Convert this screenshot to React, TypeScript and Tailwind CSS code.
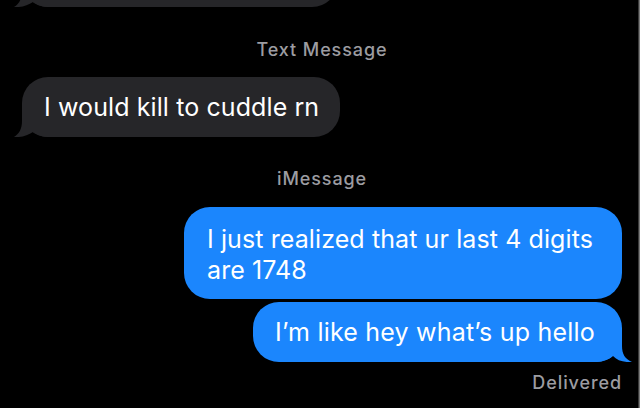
import React from "react";

const GRAY = "#262629";
const BLUE = "#1b86fd";

function LeftTail() {
  return (
    <svg
      className="absolute left-[-10px] bottom-0"
      width="40"
      height="28"
      viewBox="0 0 40 28"
    >
      <path
        d="M10 0 L10 12 C10 20 7 25 2 28 C9 28.6 16 26.5 21 23 C25 26 30 28 38 28 L38 0 Z"
        fill={GRAY}
      />
    </svg>
  );
}

function RightTail() {
  return (
    <svg
      className="absolute right-[-10px] bottom-0"
      width="40"
      height="28"
      viewBox="0 0 40 28"
    >
      <path
        d="M30 0 L30 12 C30 20 33 25 40 28 C32 28.6 25 26.5 21 22 C16 26 10 28 2 28 L2 0 Z"
        fill={BLUE}
      />
    </svg>
  );
}

export default function App() {
  return (
    <div
      className="w-[640px] h-[408px] bg-black overflow-hidden flex"
      style={{ fontFamily: "Inter, 'Noto Sans', sans-serif" }}
    >
      <div className="w-[638px] flex flex-col">
        {/* partial bubble at top */}
        <div
          className="relative ml-[22px] mt-[-53px] w-[316px] h-[60px] rounded-[26px]"
          style={{ backgroundColor: GRAY }}
        >
          <LeftTail />
        </div>

        <div className="mt-[32px] pl-[6px] text-center text-[18px] leading-[22px] font-medium tracking-[0.9px] text-[#9c9ca1]">
          Text Message
        </div>

        <div
          className="relative mt-[16px] ml-[22px] w-[318px] h-[60px] rounded-[26px] flex items-center pl-[22px]"
          style={{ backgroundColor: GRAY }}
        >
          <LeftTail />
          <span className="relative whitespace-nowrap text-white text-[25px] leading-[31px] tracking-[0.1px]">
            I would kill to cuddle rn
          </span>
        </div>

        <div className="mt-[31px] pl-[6px] text-center text-[18px] leading-[22px] font-medium tracking-[0.9px] text-[#9c9ca1]">
          iMessage
        </div>

        <div className="mt-[17px] self-end mr-[16px] w-[438px] h-[92px] rounded-[26px] flex items-center pl-[23px] pt-[4px]"
          style={{ backgroundColor: BLUE }}
        >
          <span className="whitespace-nowrap text-white text-[25px] leading-[31px] tracking-[0.1px]">
            I just realized that ur last 4 digits
            <br />
            are 1748
          </span>
        </div>

        <div
          className="relative mt-[3px] self-end mr-[16px] w-[369px] h-[60px] rounded-[26px] flex items-center pl-[22px]"
          style={{ backgroundColor: BLUE }}
        >
          <RightTail />
          <span className="relative whitespace-nowrap text-white text-[25px] leading-[31px] tracking-[0.2px]">
            I’m like hey what’s up hello
          </span>
        </div>

        <div className="mt-[10px] pr-[16px] text-right text-[18px] leading-[22px] font-medium tracking-[0.9px] text-[#9c9ca1]">
          Delivered
        </div>
      </div>
      <div className="w-[1px] bg-[#3a3a3a]" />
      <div className="w-[1px] bg-[#7a7a7a]" />
    </div>
  );
}
